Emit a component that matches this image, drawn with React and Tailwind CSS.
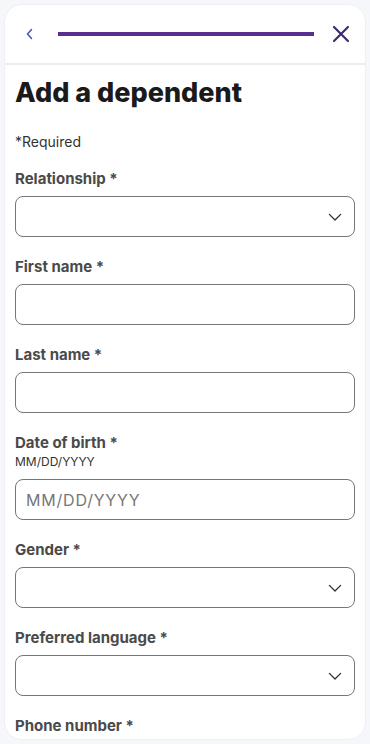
import React from "react";

const Chevron = () => (
  <svg width="18" height="18" viewBox="0 0 24 24" fill="none" stroke="#333" strokeWidth="1.8" strokeLinecap="round" strokeLinejoin="round">
    <path d="M4.5 8.5l7.5 7.5 7.5-7.5" />
  </svg>
);

const Label = ({ children }) => (
  <div className="h-5 flex items-center text-[15px] font-bold text-[#4a4a4a]">{children}</div>
);

const Field = ({ label, hint, select, placeholder }) => (
  <div className="mb-5">
    <Label>{label}</Label>
    {hint && <div className="h-4 mt-px text-[12px] leading-4 text-[#333]">{hint}</div>}
    <div
      className={`${hint ? "mt-[9px]" : "mt-[7px]"} h-[41px] rounded-lg border border-[#767676] flex items-center justify-between pl-[10px] pr-[10px]`}
    >
      <span className="text-[16px] tracking-wider text-[#777]">{placeholder}</span>
      {select && <Chevron />}
    </div>
  </div>
);

export default function App() {
  return (
    <div className="min-h-[744px] bg-[#f6f7fb] p-1" style={{ fontFamily: "Inter, 'Noto Sans', sans-serif" }}>
      <div className="h-[736px] bg-white rounded-[18px] border border-[#eef0f6] overflow-hidden">
        <div className="h-[60px] flex items-center pl-[19px] pr-[15px] border-b-2 border-[#ececec]">
          <svg width="12" height="14" viewBox="0 0 12 14" fill="none" stroke="#4b4fc0" strokeWidth="1.5" strokeLinecap="round" strokeLinejoin="round">
            <path d="M7.5 2.5L3.5 7l4 4.5" />
          </svg>
          <div className="ml-[22px] h-1 w-[256px] bg-[#5a2d91]" />
          <div className="flex-1 flex justify-end">
            <svg width="18" height="18" viewBox="0 0 18 18" fill="none" stroke="#3f2a6e" strokeWidth="2.2" strokeLinecap="round">
              <path d="M2 2l14 14M16 2L2 16" />
            </svg>
          </div>
        </div>
        <div className="pl-[10px] pr-[10px] pt-[12px]">
          <h1 className="h-8 flex items-center text-[27px] font-extrabold text-[#1a1a1a]">Add a dependent</h1>
          <div className="mt-[22px] h-5 flex items-center text-[14px] text-[#333]">*Required</div>
          <div className="mt-[18px]">
            <Field label="Relationship *" select />
            <Field label="First name *" />
            <Field label="Last name *" />
            <Field label="Date of birth *" hint="MM/DD/YYYY" placeholder="MM/DD/YYYY" />
            <Field label="Gender *" select />
            <Field label="Preferred language *" select />
            <Label>Phone number *</Label>
          </div>
        </div>
      </div>
    </div>
  );
}
